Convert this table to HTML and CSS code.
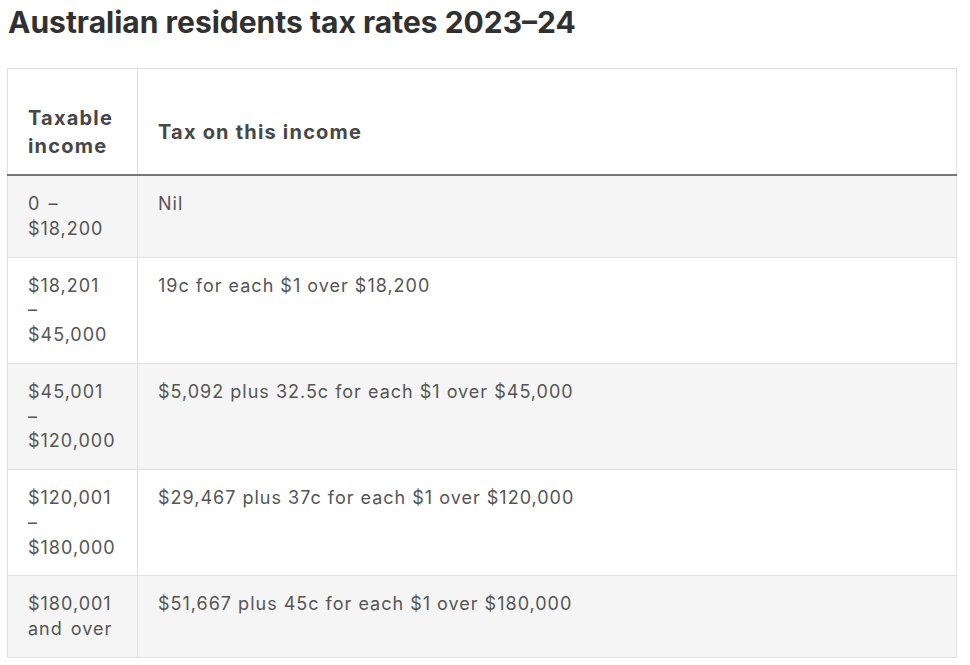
FILE: index.html
```html
<!DOCTYPE html>
<html lang="en">
<head>
<meta charset="utf-8">
<title>Australian residents tax rates 2023–24</title>
<link rel="stylesheet" href="styles.css">
</head>
<body>
<main class="page">
  <h2 class="title">Australian residents tax rates 2023–24</h2>
  <table class="rates">
    <thead>
      <tr>
        <th class="col-income">Taxable income</th>
        <th>Tax on this income</th>
      </tr>
    </thead>
    <tbody>
      <tr class="shade">
        <td class="range">0 – $18,200</td>
        <td>Nil</td>
      </tr>
      <tr>
        <td class="range">$18,201 – $45,000</td>
        <td>19c for each $1 over $18,200</td>
      </tr>
      <tr class="shade">
        <td class="range">$45,001 – $120,000</td>
        <td>$5,092 plus 32.5c for each $1 over $45,000</td>
      </tr>
      <tr>
        <td class="range">$120,001 – $180,000</td>
        <td>$29,467 plus 37c for each $1 over $120,000</td>
      </tr>
      <tr class="shade">
        <td class="range">$180,001 and over</td>
        <td>$51,667 plus 45c for each $1 over $180,000</td>
      </tr>
    </tbody>
  </table>
</main>
</body>
</html>
```

FILE: styles.css
```css
html, body {
  margin: 0;
  padding: 0;
  background: #ffffff;
}

.page {
  padding: 0 13px 0 7px;
  font-family: Inter, "Liberation Sans", sans-serif;
}

.title {
  margin: 0;
  padding: 4px 0 0 1px;
  font-size: 30px;
  line-height: 36px;
  font-weight: 700;
  color: #313131;
  letter-spacing: 0;
}

.rates {
  margin-top: 28px;
  width: 950px;
  border-collapse: collapse;
  border: 1px solid #e0e0e0;
}

.rates th {
  text-align: left;
  font-size: 20px;
  line-height: 28px;
  font-weight: 700;
  color: #474747;
  letter-spacing: 1.2px;
  padding: 35px 20px 14px;
  border-left: 1px solid #e0e0e0;
  border-bottom: 2px solid #777777;
  vertical-align: middle;
}

.rates th.col-income {
  width: 88px;
  padding-right: 21px;
}

.rates td {
  font-size: 18px;
  line-height: 24.75px;
  color: #555555;
  letter-spacing: 1px;
  padding: 16px 20px 15px;
  border-left: 1px solid #e0e0e0;
  border-top: 1px solid #e0e0e0;
  vertical-align: top;
}

.rates td.range {
  padding-right: 21px;
  word-spacing: 2px;
}

.rates tbody tr:first-child td {
  border-top: none;
}

.rates tr.shade td {
  background: #f5f5f5;
}
```
